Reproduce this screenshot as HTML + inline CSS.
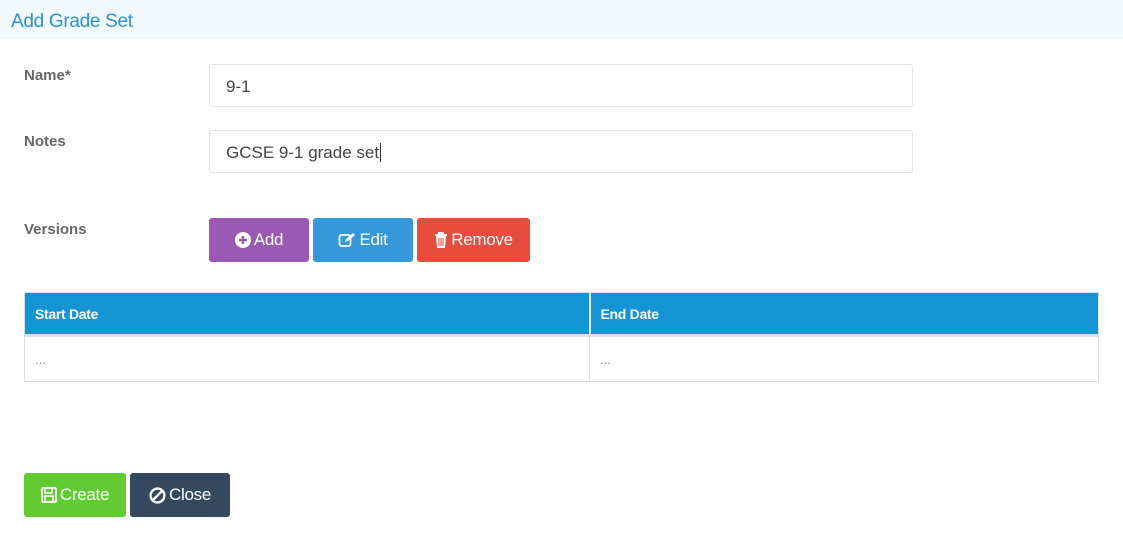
<!DOCTYPE html>
<html><head><style>
*{box-sizing:border-box;margin:0;padding:0}
body{width:1123px;height:542px;background:#fff;font-family:"Liberation Sans",sans-serif;position:relative;overflow:hidden;color:#555}
.hdr{position:absolute;left:0;top:0;width:1123px;height:39px;background:#f2f9fd}
.hdr span{position:absolute;left:11px;top:11px;font-size:19px;color:#2f8fd1;letter-spacing:-0.3px}
.lbl{position:absolute;left:24px;font-size:15px;font-weight:bold;color:#666}
.inp{position:absolute;left:209px;width:704px;height:43px;border:1px solid #e3e3e3;border-radius:3px;font-size:17px;color:#444;padding:12px 0 0 16px}
.btn{position:absolute;height:44px;border-radius:3px;color:#fff;font-size:17px;display:flex;align-items:center;justify-content:center;gap:3px;letter-spacing:-0.3px}
table{position:absolute;left:24px;top:292px;width:1075px;border-collapse:collapse}
th{background:#1594d4;color:#fff;font-size:14px;text-align:left;height:43px;padding-left:10px;border:1px solid #ddd;border-right:2px solid #e8e8e8;border-bottom:3px solid #ddd;letter-spacing:-0.3px}
td{height:46px;border:1px solid #ddd;font-size:13px;color:#888;padding-left:10px}
th:last-child{border-right:1px solid #ddd}
</style></head><body>
<div class="hdr"><span>Add Grade Set</span></div>
<div class="lbl" style="top:67px">Name*</div>
<div class="lbl" style="top:133px">Notes</div>
<div class="lbl" style="top:221px">Versions</div>
<div class="inp" style="top:64px">9-1</div>
<div class="inp" style="top:130px">GCSE 9-1 grade set<span style="border-left:1px solid #333;margin-left:1px"></span></div>
<div class="btn" style="left:209px;top:218px;width:100px;background:#9b59b6"><svg width="16" height="16" viewBox="0 0 16 16"><circle cx="8" cy="8" r="8" fill="#fff"/><path d="M8 4v8M4 8h8" stroke="#9b59b6" stroke-width="2.4"/></svg>Add</div>
<div class="btn" style="left:313px;top:218px;width:100px;background:#3498db"><svg width="18" height="16" viewBox="0 0 18 16"><rect x="1.5" y="3" width="11" height="11" rx="2" fill="none" stroke="#fff" stroke-width="1.8"/><path d="M7 10l1-3 7-6 2 2-7 6z" fill="#fff"/></svg>Edit</div>
<div class="btn" style="left:417px;top:218px;width:113px;background:#e74c3c"><svg width="14" height="16" viewBox="0 0 14 16"><path d="M1 3h12M5 3V1h4v2" stroke="#fff" stroke-width="2" fill="none"/><path d="M2 4h10l-1 12H3z" fill="#fff"/><path d="M5 6v8M7 6v8M9 6v8" stroke="#e74c3c" stroke-width="1"/></svg>Remove</div>
<table><tr><th style="width:565px">Start Date</th><th>End Date</th></tr>
<tr><td>...</td><td>...</td></tr></table>
<div class="btn" style="left:24px;top:473px;width:102px;height:44px;background:#62cb31"><svg width="16" height="16" viewBox="0 0 16 16"><rect x="1" y="1" width="14" height="14" rx="1" fill="none" stroke="#fff" stroke-width="1.8"/><rect x="4" y="1" width="7" height="5" fill="none" stroke="#fff" stroke-width="1.5"/><rect x="4" y="9" width="8" height="6" fill="none" stroke="#fff" stroke-width="1.5"/></svg>Create</div>
<div class="btn" style="left:130px;top:473px;width:100px;height:44px;background:#34495e"><svg width="17" height="17" viewBox="0 0 16 16"><circle cx="8" cy="8" r="6.5" fill="none" stroke="#fff" stroke-width="2.2"/><path d="M3.5 12.5l9-9" stroke="#fff" stroke-width="2.2"/></svg>Close</div>
</body></html>
